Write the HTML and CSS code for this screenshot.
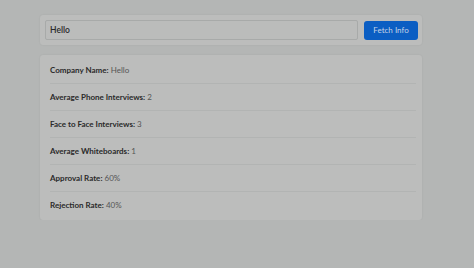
FILE: index.html
```html
<!DOCTYPE html>
<html>
<head>
<meta charset="utf-8">
<link rel="stylesheet" href="styles.css">
</head>
<body>
<div class="wrap">
  <div class="search card">
    <input class="field" type="text" value="Hello">
    <button class="btn">Fetch Info</button>
  </div>
  <div class="info card">
    <div class="row"><b>Company Name:</b> Hello</div>
    <div class="row"><b>Average Phone Interviews:</b> 2</div>
    <div class="row"><b>Face to Face Interviews:</b> 3</div>
    <div class="row"><b>Average Whiteboards:</b> 1</div>
    <div class="row"><b>Approval Rate:</b> 60%</div>
    <div class="row"><b>Rejection Rate:</b> 40%</div>
  </div>
</div>
</body>
</html>
```

FILE: styles.css
```css
html, body {
  margin: 0;
  padding: 0;
  background: #b4b6b5;
  font-family: Lato, "Liberation Sans", sans-serif;
  font-size: 8px;
  color: #333;
}
.wrap {
  width: 382px;
  margin: 15px 0 0 40px;
  display: flex;
  flex-direction: column;
  gap: 10px;
}
.card {
  background: #bcbdbc;
  border-radius: 3px;
  box-shadow: 0 0 2px rgba(0,0,0,0.08);
}
.search {
  display: flex;
  align-items: center;
  gap: 6px;
  padding: 5px 4px 5px 5px;
}
.field {
  flex: 1;
  height: 20px;
  box-sizing: border-box;
  margin: 0;
  border: 1px solid #a8aaa9;
  border-radius: 2px;
  background: #bbbcbb;
  padding: 0 4px;
  font: 600 8.5px Lato, sans-serif;
  color: #2a2a2a;
}
.btn {
  width: 54px;
  height: 19px;
  margin: 0;
  border: none;
  border-radius: 3px;
  background: #0b5ec3;
  color: #c6d4e6;
  font: 8px Lato, sans-serif;
  padding: 0;
}
.info {
  padding: 2px 6px 2px 10px;
}
.row {
  height: 26px;
  line-height: 26px;
  border-bottom: 1px solid #b2b4b3;
  color: #555;
}
.row:last-child {
  border-bottom: none;
}
.row b {
  color: #2a2a2a;
  font-weight: 700;
}
```
